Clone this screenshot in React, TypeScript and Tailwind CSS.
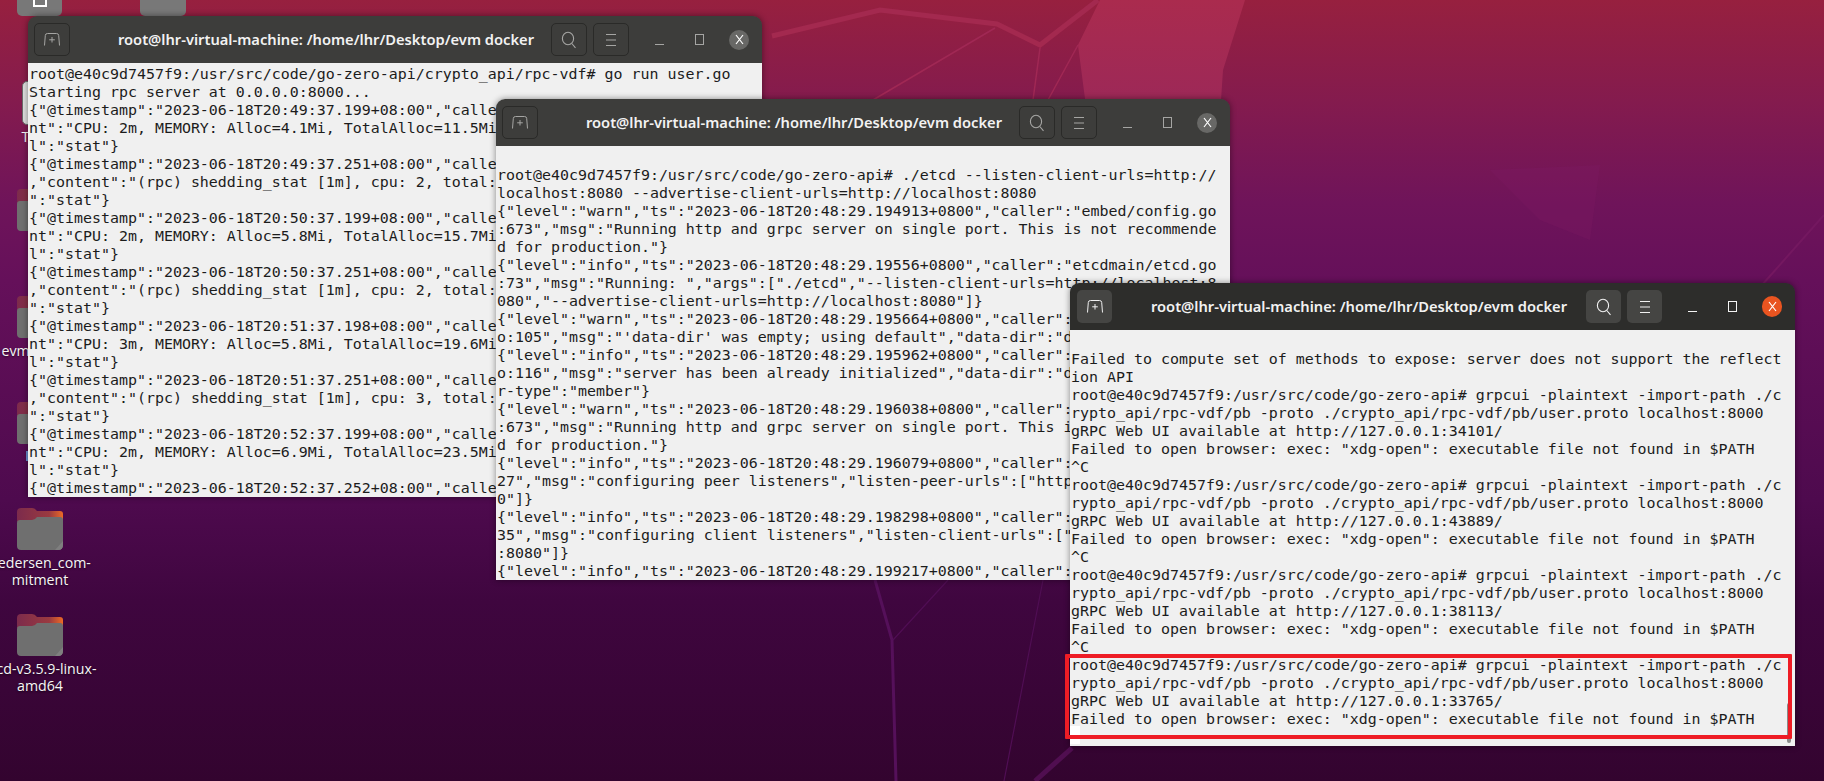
import React from "react";

const ts = (t: string) => `{"@timestamp":"2023-06-18T20:${t}+08:00","calle`;
const lvl = (l: string, t: string) => `{"level":"${l}","ts":"2023-06-18T20:48:29.${t}+0800","caller":`;

const win1 = [
  "root@e40c9d7457f9:/usr/src/code/go-zero-api/crypto_api/rpc-vdf# go run user.go",
  "Starting rpc server at 0.0.0.0:8000...",
  ts("49:37.199"),
  'nt":"CPU: 2m, MEMORY: Alloc=4.1Mi, TotalAlloc=11.5Mi',
  'l":"stat"}',
  ts("49:37.251"),
  ',"content":"(rpc) shedding_stat [1m], cpu: 2, total:',
  '":"stat"}',
  ts("50:37.199"),
  'nt":"CPU: 2m, MEMORY: Alloc=5.8Mi, TotalAlloc=15.7Mi',
  'l":"stat"}',
  ts("50:37.251"),
  ',"content":"(rpc) shedding_stat [1m], cpu: 2, total:',
  '":"stat"}',
  ts("51:37.198"),
  'nt":"CPU: 3m, MEMORY: Alloc=5.8Mi, TotalAlloc=19.6Mi',
  'l":"stat"}',
  ts("51:37.251"),
  ',"content":"(rpc) shedding_stat [1m], cpu: 3, total:',
  '":"stat"}',
  ts("52:37.199"),
  'nt":"CPU: 2m, MEMORY: Alloc=6.9Mi, TotalAlloc=23.5Mi',
  'l":"stat"}',
  ts("52:37.252"),
];

const win2 = [
  "",
  "root@e40c9d7457f9:/usr/src/code/go-zero-api# ./etcd --listen-client-urls=http://",
  "localhost:8080 --advertise-client-urls=http://localhost:8080",
  lvl("warn", "194913") + '"embed/config.go',
  ':673","msg":"Running http and grpc server on single port. This is not recommende',
  'd for production."}',
  '{"level":"info","ts":"2023-06-18T20:48:29.19556+0800","caller":"etcdmain/etcd.go',
  ':73","msg":"Running: ","args":["./etcd","--listen-client-urls=http://localhost:8',
  '080","--advertise-client-urls=http://localhost:8080"]}',
  lvl("warn", "195664"),
  `o:105","msg":"'data-dir' was empty; using default","data-dir":"d`,
  lvl("info", "195962"),
  'o:116","msg":"server has been already initialized","data-dir":"d',
  'r-type":"member"}',
  lvl("warn", "196038"),
  ':673","msg":"Running http and grpc server on single port. This i',
  'd for production."}',
  lvl("info", "196079"),
  '27","msg":"configuring peer listeners","listen-peer-urls":["http',
  '0"]}',
  lvl("info", "198298"),
  '35","msg":"configuring client listeners","listen-client-urls":["',
  ':8080"]}',
  lvl("info", "199217"),
];

const cmdA = "root@e40c9d7457f9:/usr/src/code/go-zero-api# grpcui -plaintext -import-path ./c";
const cmdB = "rypto_api/rpc-vdf/pb -proto ./crypto_api/rpc-vdf/pb/user.proto localhost:8000";
const fail = 'Failed to open browser: exec: "xdg-open": executable file not found in $PATH';

const win3 = [
  "",
  "Failed to compute set of methods to expose: server does not support the reflect",
  "ion API",
  cmdA,
  cmdB,
  "gRPC Web UI available at http://127.0.0.1:34101/",
  fail,
  "^C",
  cmdA,
  cmdB,
  "gRPC Web UI available at http://127.0.0.1:43889/",
  fail,
  "^C",
  cmdA,
  cmdB,
  "gRPC Web UI available at http://127.0.0.1:38113/",
  fail,
  "^C",
  cmdA,
  cmdB,
  "gRPC Web UI available at http://127.0.0.1:33765/",
  fail,
];

function HeaderButton({ focused, children }: { focused: boolean; children: React.ReactNode }) {
  return (
    <div
      className={
        focused
          ? "flex h-[33px] w-[35px] shrink-0 items-center justify-center rounded-[5px] bg-[#454543] text-[#f0f0f0]"
          : "flex h-[33px] w-9 shrink-0 items-center justify-center rounded-[5px] border border-[#2a2a28] bg-[#3d3d3b] text-[#a5a5a3]"
      }
    >
      {children}
    </div>
  );
}

function TitleBar({ focused, titleClass }: { focused: boolean; titleClass: string }) {
  const cell = "flex h-full w-10 items-center justify-center";
  const tone = focused ? "text-[#f4f4f4]" : "text-[#a5a5a3]";
  return (
    <div
      className={
        focused
          ? "flex h-[47px] shrink-0 items-center bg-[#2d2d2b] pl-[7px] pr-[3px]"
          : "flex h-[47px] shrink-0 items-center bg-[#3d3d3b] pl-[6px] pr-[3px]"
      }
    >
      <HeaderButton focused={focused}>
        <svg width="16" height="13" viewBox="0 0 16 13" fill="none" stroke="currentColor" strokeWidth="1">
          <path d="M0.5 12.5 L1.3 2.5 Q1.4 0.5 3.5 0.5 H12.5 Q14.6 0.5 14.7 2.5 L15.5 12.5" />
          <path d="M8 4 V9.5 M5.2 6.8 H10.8" />
        </svg>
      </HeaderButton>
      <div
        className={`min-w-0 flex-1 text-center font-['Noto_Sans',sans-serif] text-[14.7px] font-semibold whitespace-nowrap text-[#f2f2f2] ${titleClass}`}
      >
        root@lhr-virtual-machine: /home/lhr/Desktop/evm docker
      </div>
      <div className="flex items-center gap-[6px]">
        <HeaderButton focused={focused}>
          <svg width="16" height="18" viewBox="0 0 16 18" fill="none" stroke="currentColor" strokeWidth="1.1">
            <ellipse cx="7" cy="7.5" rx="5.6" ry="6.3" />
            <path d="M10.8 12.5 L14.5 16.8" />
          </svg>
        </HeaderButton>
        <HeaderButton focused={focused}>
          <svg width="12" height="14" viewBox="0 0 12 14" fill="none" stroke="currentColor" strokeWidth="1.1">
            <path d="M1 1.5 H11 M1 7 H11 M1 12.5 H11" />
          </svg>
        </HeaderButton>
      </div>
      <div className={`ml-[10px] flex h-[33px] items-center ${tone}`}>
        <div className={cell}>
          <div className="mt-[9px] h-px w-[9px] bg-current" />
        </div>
        <div className={cell}>
          <div className="h-[11px] w-[9px] border border-current" />
        </div>
        <div className={cell}>
          <div
            className={
              focused
                ? "flex h-[21px] w-[20px] items-center justify-center rounded-full bg-[#e95420] text-white"
                : "flex h-[20px] w-[20px] items-center justify-center rounded-full bg-[#686866] text-white"
            }
          >
            <svg width="9" height="11" viewBox="0 0 9 11" fill="none" stroke="currentColor" strokeWidth="1.2">
              <path d="M1 1 L8 10 M8 1 L1 10" />
            </svg>
          </div>
        </div>
      </div>
    </div>
  );
}

function TerminalWindow({
  lines,
  focused,
  className,
  titleClass,
  children,
}: {
  lines: string[];
  focused?: boolean;
  className: string;
  titleClass: string;
  children?: React.ReactNode;
}) {
  return (
    <div
      className={`absolute flex flex-col overflow-hidden rounded-t-[9px] shadow-[0_0_6px_rgba(0,0,0,0.45)] ${className}`}
    >
      <TitleBar focused={!!focused} titleClass={titleClass} />
      <div className="relative min-h-0 flex-1 overflow-hidden bg-[#f0f0f0] pt-[2px] pl-px font-['DejaVu_Sans_Mono',monospace] text-[14.95px] leading-[18px] text-[#1c1c1c]">
        {lines.map((l, i) => (
          <div key={i} className="h-[18px] whitespace-pre">
            {l}
          </div>
        ))}
        {children}
      </div>
    </div>
  );
}

function Folder() {
  return (
    <svg width="46" height="42" viewBox="0 0 46 42" className="shrink-0">
      <defs>
        <linearGradient id="folderTab" x1="0" x2="1" y1="0" y2="0">
          <stop offset="0" stopColor="#7c2b4c" />
          <stop offset="0.7" stopColor="#9a3a40" />
          <stop offset="1" stopColor="#ec6a26" />
        </linearGradient>
      </defs>
      <path d="M0 12 V4 Q0 0 4 0 H15 Q18 0 20 3 H43 Q46 3 46 6 V14 H0 Z" fill="url(#folderTab)" />
      <path
        d="M0 15 Q0 12 3 12 H15 Q18 12 20 9 H43 Q46 9 46 12 V37 Q46 42 41 42 H4 Q0 42 0 38 Z"
        fill="#6f6f6f"
      />
      <path d="M46 33 V37 Q46 42 41 42 H38 Z" fill="#7f7f7f" />
    </svg>
  );
}

function DesktopIcon({ className, label }: { className: string; label?: string }) {
  return (
    <div className={`absolute left-[-30px] flex w-[140px] flex-col items-center gap-1 ${className}`}>
      <Folder />
      {label && (
        <div className="text-center font-['Open_Sans',sans-serif] text-[14.2px] leading-[17px] whitespace-pre text-[#f6f6f6] [text-shadow:0_1px_2px_rgba(0,0,0,0.6)]">
          {label}
        </div>
      )}
    </div>
  );
}

function Wallpaper() {
  return (
    <svg className="absolute inset-0" width="1824" height="781" viewBox="0 0 1824 781" fill="none">
      <defs>
        <linearGradient id="facet" x1="0" x2="0" y1="0" y2="1">
          <stop offset="0" stopColor="#aa2b4e" />
          <stop offset="0.4" stopColor="#9b2859" />
          <stop offset="1" stopColor="#7c1d60" />
        </linearGradient>
      </defs>
      <polygon points="1100,0 1245,0 1223,70 1221,100 1219,290 1110,290 1078,45" fill="url(#facet)" />
      <path d="M772 36 L880 10 L997 24 L1040 45 L1098 0" stroke="#a3294f" strokeWidth="5" />
      <path d="M995 28 L873 100 M1040 48 L1033 100 M1078 45 L1048 100" stroke="#a02854" strokeWidth="1.5" />
      <path d="M875 580 L892 640 L896 781" stroke="#55105a" strokeWidth="3" />
      <path d="M948 580 L893 640 M1043 580 L1004 781" stroke="#500e54" strokeWidth="1.2" />
      <path d="M1035 781 L1072 748" stroke="#500e50" strokeWidth="5" />
      <polygon points="1490,170 1600,165 1590,240 1540,220" fill="#7e1c62" fillOpacity="0.3" />
      <path d="M1824 215 L1762 285" stroke="#741860" strokeWidth="2" />
    </svg>
  );
}

export default function App() {
  return (
    <div className="relative h-[781px] w-[1824px] overflow-hidden bg-[linear-gradient(180deg,#97203f_0%,#841b4e_13%,#6f145a_26%,#65105a_36%,#4e0a4e_64%,#3f063f_77%,#33042f_100%)]">
      <Wallpaper />

      {/* desktop icons */}
      <div className="absolute top-[-10px] left-[17px] h-[26px] w-[45px] rounded-b-[5px] bg-[#787878]">
        <div className="absolute top-[10px] left-[16px] h-[7px] w-[14px] border-2 border-t-0 border-white" />
      </div>
      <div className="absolute top-[-10px] left-[140px] h-[26px] w-[46px] rounded-b-[5px] bg-[#787878]" />
      <div className="absolute top-[81px] left-[-30px] flex w-[140px] flex-col items-center gap-[3px]">
        <div className="h-[44px] w-[36px] rounded-[5px] border border-[#6a6a6a] bg-[#dedede]" />
        <div className="font-['Open_Sans',sans-serif] text-[14.2px] leading-[17px] text-[#f6f6f6]">Trash</div>
      </div>
      <DesktopIcon className="top-[189px]" />
      <DesktopIcon className="top-[296px]" label="evm docker" />
      <DesktopIcon className="top-[402px]" />
      <div className="absolute top-[451px] left-[26px] h-[10px] w-[2px] bg-[#6a8fd0]" />
      <DesktopIcon className="top-[508px]" label={"pedersen_com-\nmitment"} />
      <DesktopIcon className="top-[614px]" label={"etcd-v3.5.9-linux-\namd64"} />

      <TerminalWindow lines={win1} className="top-[16px] left-[28px] h-[481px] w-[734px]" titleClass="pl-[31px]" />
      <TerminalWindow lines={win2} className="top-[99px] left-[496px] h-[481px] w-[734px]" titleClass="pl-[31px]" />
      <TerminalWindow lines={win3} focused className="top-[283px] left-[1070px] h-[463px] w-[725px]" titleClass="pl-[20px]">
        <div className="absolute top-[396px] left-0 h-[18px] w-[10px] bg-white" />
        <div className="absolute top-[373px] right-[4px] h-[40px] w-[4px] rounded-full bg-[#8a8a8a]" />
      </TerminalWindow>

      {/* red annotation */}
      <div className="absolute top-[654px] left-[1065px] h-[85px] w-[727px] rounded-[1px] border-4 border-[#ee1c25]" />
    </div>
  );
}
